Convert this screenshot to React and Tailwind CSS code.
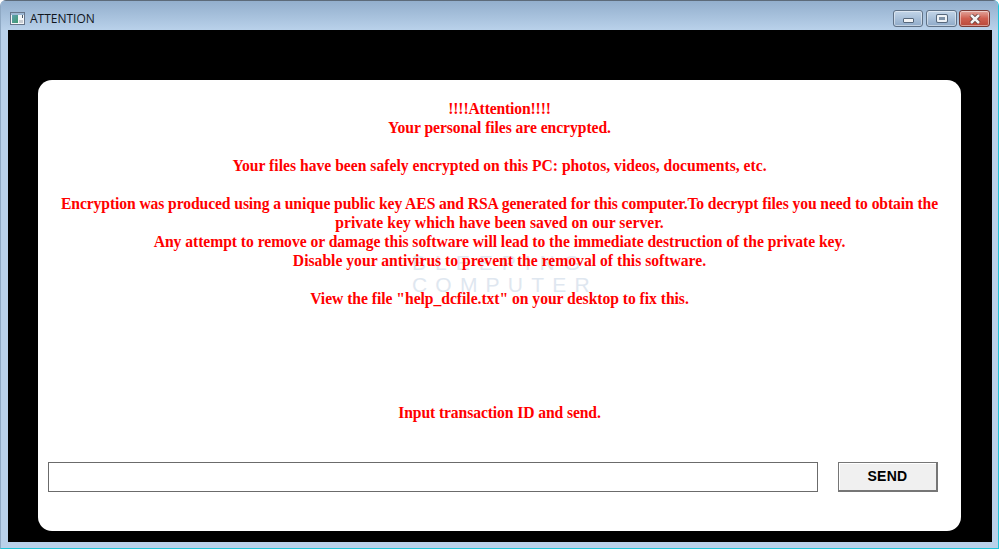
import React from "react";

const serif = { fontFamily: '"Liberation Serif", serif' };

function CaptionButton({ className = "", children }) {
  return (
    <div className={`flex h-[17px] items-center justify-center rounded-[3px] border border-[#5f7186] shadow-[inset_0_0_0_1px_rgba(255,255,255,0.45)] ${className}`}>
      {children}
    </div>
  );
}

export default function App() {
  return (
    <div className="flex h-[550px] w-[1000px] flex-col bg-white pb-px pr-px">
      <div className="flex flex-1 flex-col overflow-hidden rounded-t-[6px] border-b border-l border-r border-[#1fc4d8] border-l-[#8fa9c4] bg-[#b9d1ea]">
        {/* title bar */}
        <div className="flex h-[30px] shrink-0 items-start justify-between border-t border-[#5d6b7a] bg-gradient-to-b from-[#93afcd] to-[#b9d1ea] pl-[9px] pr-[8px] pt-[9px]">
          <div className="flex items-center gap-[5px] pt-[2px]">
            <svg width="15" height="13" viewBox="0 0 15 13">
              <defs>
                <linearGradient id="appIcon" x1="0" y1="0" x2="1" y2="1">
                  <stop offset="0" stopColor="#5f9fb0" />
                  <stop offset="1" stopColor="#3f9a70" />
                </linearGradient>
              </defs>
              <rect x="0.5" y="0.5" width="14" height="12" fill="#f4f6f8" stroke="#66758a" />
              <rect x="1" y="1" width="13" height="2" fill="#9db8d4" />
              <rect x="2" y="3" width="6" height="8" fill="url(#appIcon)" />
              <rect x="9" y="8" width="4" height="3" fill="#c9ced4" />
              <rect x="12" y="3" width="1" height="3" fill="#4a5a6a" />
            </svg>
            <span className="text-[12px] leading-none text-[#10151c]" style={{ fontFamily: '"Open Sans", sans-serif' }}>ATTENTION</span>
          </div>
          <div className="flex gap-[2px]">
            <CaptionButton className="mr-px w-[30px] items-end bg-gradient-to-b from-[#c3d5e8] via-[#a9c0d9] to-[#8faac8] pb-[3px]">
              <div className="h-[5px] w-[11px] rounded-[1px] border border-[#56677b] bg-[#f2f4f6]" />
            </CaptionButton>
            <CaptionButton className="w-[31px] bg-gradient-to-b from-[#c3d5e8] via-[#a9c0d9] to-[#8faac8]">
              <div className="h-[7px] w-[10px] rounded-[1px] border-2 border-[#eef2f6] bg-[#7f93a8] shadow-[0_0_0_1px_#56677b]" />
            </CaptionButton>
            <CaptionButton className="w-[31px] border-[#7a3a34] bg-gradient-to-b from-[#e0a59c] via-[#cf5f50] to-[#b8483a]">
              <svg width="14" height="10" viewBox="0 0 14 10">
                <path d="M3 1 L11 9 M11 1 L3 9" stroke="#4c2a28" strokeWidth="4" />
                <path d="M3 1 L11 9 M11 1 L3 9" stroke="#f3f3f3" strokeWidth="2.6" />
              </svg>
            </CaptionButton>
          </div>
        </div>

        {/* client area */}
        <div className="mb-[6px] ml-[7px] mr-[6px] flex flex-1 flex-col bg-black pb-[11px] pl-[30px] pr-[31px] pt-[50px]">
          <div className="relative flex flex-1 flex-col rounded-[14px] bg-white">
            {/* watermark */}
            <div className="absolute left-[374px] top-[172px] whitespace-nowrap text-[21px] leading-[22px] text-[#dfe7f0]" style={{ fontFamily: '"Liberation Sans", sans-serif' }}>
              <div className="tracking-[9px]">BLEEPING</div>
              <div className="tracking-[8.2px]">COMPUTER</div>
            </div>

            <div className="relative px-[15px] pt-[19px] text-center text-[15.65px] font-bold leading-[19px] text-[#ff0000]" style={serif}>
              <p className="tracking-[-0.15px]">!!!!Attention!!!!</p>
              <p className="tracking-[-0.06px]">Your personal files are encrypted.</p>
              <p className="mt-[19px]">Your files have been safely encrypted on this PC: photos, videos, documents, etc.</p>
              <p className="mt-[19px] whitespace-nowrap tracking-[-0.1px]">Encryption was produced using a unique public key AES and RSA generated for this computer.To decrypt files you need to obtain the</p>
              <p className="tracking-[0.05px]">private key which have been saved on our server.</p>
              <p className="tracking-[-0.05px]">Any attempt to remove or damage this software will lead to the immediate destruction of the private key.</p>
              <p>Disable your antivirus to prevent the removal of this software.</p>
              <p className="mt-[19px] tracking-[-0.04px]">View the file "help_dcfile.txt" on your desktop to fix this.</p>
              <p className="mt-[95px] tracking-[-0.1px]">Input transaction ID and send.</p>
            </div>

            <div className="mt-[40px] flex gap-[20px] pl-[10px]">
              <div className="h-[30px] w-[770px] border border-[#6b6b6b] bg-white" />
              <button className="h-[30px] w-[100px] border border-b-2 border-r-2 border-[#767676] bg-[#f0f0f0] text-[14px] font-bold tracking-[0.3px] text-black shadow-[inset_1px_1px_0_#ffffff]" style={{ fontFamily: '"Liberation Sans", sans-serif' }}>
                SEND
              </button>
            </div>
          </div>
        </div>
      </div>
    </div>
  );
}
